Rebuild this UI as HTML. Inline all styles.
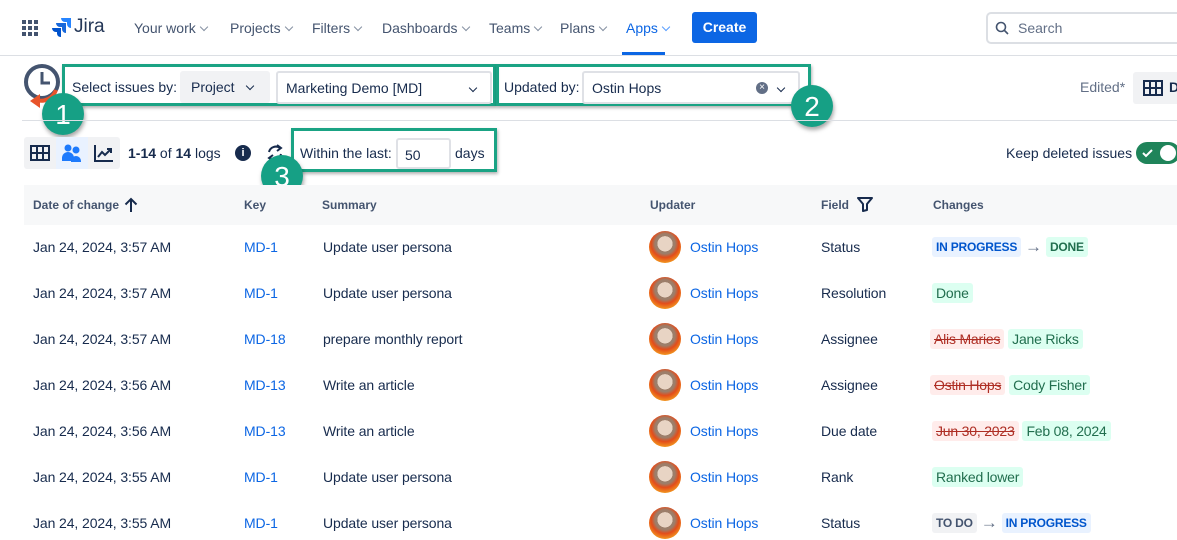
<!DOCTYPE html>
<html><head><meta charset="utf-8"><style>
*{box-sizing:border-box;margin:0;padding:0}
body{width:1177px;height:540px;overflow:hidden;background:#fff;font-family:"Liberation Sans",Arial,sans-serif;color:#172b4d;position:relative;font-size:14px}
.a{position:absolute;white-space:nowrap}
.nav{font-size:14px;color:#44546f;top:20px}
.chev{display:inline-block;width:6px;height:6px;border-right:1.5px solid #8590a2;border-bottom:1.5px solid #8590a2;transform:rotate(45deg);margin-left:5px;vertical-align:3px}
.gbox{position:absolute;border:3px solid #1aa384;box-shadow:1px 2px 3px rgba(0,0,0,.3)}
.badge{position:absolute;width:42px;height:42px;border-radius:50%;background:#16a085;color:#fff;font-size:28px;text-align:center;line-height:44px;box-shadow:1px 3px 4px rgba(0,0,0,.35)}
.sel{position:absolute;border:2px solid #dfe1e6;border-radius:3px;background:#fff;font-size:14px;padding:7px 8px;color:#172b4d}
.hd{top:198px;font-size:12px;font-weight:bold;color:#44546f}
.cell{font-size:14px;color:#172b4d;letter-spacing:-0.1px}
.link{color:#0c66e4}
.lz{display:inline-block;padding:2px 4px;border-radius:3px;font-size:14px;letter-spacing:-0.2px}
.old{background:#ffeceb;color:#ae2e24;text-decoration:line-through}
.new{background:#dcfff1;color:#216e4e}
.st{font-size:12px;font-weight:bold;padding:3px 4px}
.arr{color:#626f86;font-size:17px;vertical-align:-1px}
.av{position:absolute;width:32px;height:32px;border-radius:50%;background:radial-gradient(circle at 50% 40%,#e8d4c4 0 30%,#9c7e6a 31% 40%,#e34c1a 55%,#f4a020 80%)}
</style></head><body>
<svg class="a" style="left:22px;top:20px" width="16" height="16"><g fill="#44546f"><rect x="0" y="0" width="4" height="4"/><rect x="6" y="0" width="4" height="4"/><rect x="12" y="0" width="4" height="4"/><rect x="0" y="6" width="4" height="4"/><rect x="6" y="6" width="4" height="4"/><rect x="12" y="6" width="4" height="4"/><rect x="0" y="12" width="4" height="4"/><rect x="6" y="12" width="4" height="4"/><rect x="12" y="12" width="4" height="4"/></g></svg>
<svg class="a" style="left:52px;top:17px" width="20" height="20"><path d="M19 1H9a4 4 0 0 0 4 4h2v2a4 4 0 0 0 4 4z" fill="#2684ff"/><path d="M14 6H4a4 4 0 0 0 4 4h2v2a4 4 0 0 0 4 4z" fill="#1868db"/><path d="M9 11H0a4 4 0 0 0 4 4h1v2a4 4 0 0 0 4 3z" fill="#0052cc"/></svg>
<div class="a" style="left:74px;top:16px;font-size:19px;color:#253858">Jira</div>
<div class="a nav" style="left:134px">Your work<span class="chev"></span></div>
<div class="a nav" style="left:230px">Projects<span class="chev"></span></div>
<div class="a nav" style="left:312px">Filters<span class="chev"></span></div>
<div class="a nav" style="left:382px">Dashboards<span class="chev"></span></div>
<div class="a nav" style="left:489px">Teams<span class="chev"></span></div>
<div class="a nav" style="left:560px">Plans<span class="chev"></span></div>
<div class="a nav" style="left:626px;color:#0c66e4">Apps<span class="chev" style="border-color:#579dff"></span></div>
<div class="a" style="left:622px;top:52px;width:43px;height:3px;background:#0c66e4"></div>
<div class="a" style="left:692px;top:12px;width:65px;height:31px;background:#0c66e4;border-radius:3px;color:#fff;font-weight:bold;font-size:14px;text-align:center;line-height:31px">Create</div>
<div class="a" style="left:986px;top:12px;width:200px;height:32px;border:2px solid #dcdfe4;border-radius:5px"></div>
<svg class="a" style="left:995px;top:21px" width="14" height="14"><circle cx="6" cy="6" r="4.5" fill="none" stroke="#44546f" stroke-width="1.6"/><path d="M9.5 9.5L13 13" stroke="#44546f" stroke-width="1.6"/></svg>
<div class="a" style="left:1018px;top:20px;color:#626f86">Search</div>
<div class="a" style="left:0;top:55px;width:1177px;height:1px;background:#dcdfe4"></div>

<svg class="a" style="left:22px;top:62px" width="44" height="52"><circle cx="20" cy="20" r="16" fill="none" stroke="#44546f" stroke-width="4"/><path d="M20 10v11h8" fill="none" stroke="#44546f" stroke-width="3"/><path d="M34 28a16 16 0 0 1-20 10" fill="none" stroke="#e8542a" stroke-width="4"/><path d="M8 39l10-7v14z" fill="#e8542a"/></svg>
<div class="gbox" style="left:62px;top:64px;width:434px;height:42px"></div>
<div class="a" style="left:72px;top:79px">Select issues by:</div>
<div class="a" style="left:180px;top:71px;width:90px;height:32px;background:#f1f2f4;border-radius:3px"></div>
<div class="a" style="left:191px;top:79px">Project<span class="chev" style="border-color:#172b4d;margin-left:12px"></span></div>
<div class="sel" style="left:276px;top:71px;width:216px;height:33px">Marketing Demo [MD]<span class="chev" style="border-color:#172b4d;position:absolute;right:14px;top:12px"></span></div>
<div class="gbox" style="left:496px;top:64px;width:315px;height:42px"></div>
<div class="a" style="left:504px;top:79px">Updated by:</div>
<div class="sel" style="left:582px;top:71px;width:218px;height:33px">Ostin Hops
<span style="position:absolute;right:30px;top:9px;width:12px;height:12px;border-radius:50%;background:#626f86;color:#fff;font-size:10px;line-height:12px;text-align:center">×</span>
<span class="chev" style="border-color:#172b4d;position:absolute;right:14px;top:12px"></span></div>
<div class="badge" style="left:42px;top:93px">1</div>
<div class="badge" style="left:791px;top:85px">2</div>
<div class="a" style="left:1080px;top:79px;color:#626f86">Edited*</div>
<div class="a" style="left:1133px;top:72px;width:50px;height:32px;background:#f1f2f4;border-radius:3px"></div>
<svg class="a" style="left:1143px;top:80px" width="20" height="16"><rect x="1" y="1" width="18" height="14" fill="none" stroke="#172b4d" stroke-width="2"/><path d="M7 1v14M13 1v14M1 8h18" stroke="#172b4d" stroke-width="2"/></svg>
<div class="a" style="left:1169px;top:79px;font-weight:bold">D</div>
<div class="a" style="left:22px;top:120px;width:1155px;height:1px;background:#dcdfe4"></div>

<div class="a" style="left:24px;top:137px;width:96px;height:32px;background:#f1f2f4;border-radius:3px"></div>
<div class="a" style="left:56px;top:137px;width:32px;height:32px;background:#e9f2ff"></div>
<svg class="a" style="left:30px;top:145px" width="20" height="16"><rect x="1" y="1" width="18" height="14" fill="none" stroke="#172b4d" stroke-width="2"/><path d="M7 1v14M13 1v14M1 8h18" stroke="#172b4d" stroke-width="2"/></svg>
<svg class="a" style="left:62px;top:144px" width="20" height="18"><circle cx="6" cy="4" r="3.5" fill="#1d7afc"/><circle cx="14" cy="6" r="3.5" fill="#1d7afc"/><path d="M0 14a6 6 0 0 1 12 0v3H0z" fill="#1d7afc"/><path d="M9 17a5 5 0 0 1 10 0v1H9z" fill="#1d7afc"/></svg>
<svg class="a" style="left:94px;top:144px" width="20" height="18"><path d="M1 1v16h18" fill="none" stroke="#172b4d" stroke-width="2"/><path d="M4 13l4-5 3 3 6-6M13 5h4v4" fill="none" stroke="#172b4d" stroke-width="2"/></svg>
<div class="a" style="left:128px;top:145px"><b>1-14</b> of <b>14</b> logs</div>
<div class="a" style="left:235px;top:145px;width:16px;height:16px;border-radius:50%;background:#172b4d;color:#fff;font-size:11px;font-weight:bold;text-align:center;line-height:16px">i</div>
<svg class="a" style="left:265px;top:143px" width="20" height="20"><path d="M15 5a7 7 0 0 0-11 4M5 15a7 7 0 0 0 11-4" fill="none" stroke="#172b4d" stroke-width="2"/><path d="M12 2l4 3-4 3M8 18l-4-3 4-3" fill="none" stroke="#172b4d" stroke-width="2"/></svg>
<div class="gbox" style="left:291px;top:128px;width:206px;height:44px"></div>
<div class="a" style="left:300px;top:145px">Within the last:</div>
<div class="a" style="left:396px;top:138px;width:55px;height:31px;border:2px solid #dfe1e6;border-radius:3px;padding:7px 7px">50</div>
<div class="a" style="left:455px;top:145px">days</div>
<div class="badge" style="left:261px;top:155px">3</div>
<div class="a" style="left:1006px;top:145px">Keep deleted issues</div>
<div class="a" style="left:1136px;top:142px;width:44px;height:22px;border-radius:11px;background:#1f845a"></div>
<div class="a" style="left:1160px;top:145px;width:16px;height:16px;border-radius:50%;background:#fff"></div>
<svg class="a" style="left:1142px;top:148px" width="12" height="10"><path d="M1 5l3 3 6-6" fill="none" stroke="#fff" stroke-width="2"/></svg>

<div class="a" style="left:24px;top:185px;width:1153px;height:40px;background:#f7f8f9"></div>
<div class="a hd" style="left:33px">Date of change</div>
<svg class="a" style="left:124px;top:197px" width="14" height="16"><path d="M7 15V2M1.5 7.5L7 2l5.5 5.5" fill="none" stroke="#172b4d" stroke-width="2"/></svg>
<div class="a hd" style="left:244px">Key</div>
<div class="a hd" style="left:322px">Summary</div>
<div class="a hd" style="left:650px">Updater</div>
<div class="a hd" style="left:821px">Field</div>
<svg class="a" style="left:857px;top:197px" width="16" height="15"><path d="M1 1h14l-5 6v6l-4 1V7z" fill="none" stroke="#172b4d" stroke-width="2" stroke-linejoin="round"/></svg>
<div class="a hd" style="left:933px">Changes</div>

<div class="a cell" style="left:33px;top:239px">Jan 24, 2024, 3:57 AM</div><div class="a cell link" style="left:244px;top:239px">MD-1</div><div class="a cell" style="left:323px;top:239px">Update user persona</div><div class="av" style="left:649px;top:231px"></div><div class="a cell link" style="left:690px;top:239px">Ostin Hops</div><div class="a cell" style="left:821px;top:239px">Status</div>
<div class="a" style="left:932px;top:237px"><span class="lz st" style="background:#e9f2ff;color:#0055cc">IN PROGRESS</span> <span class="arr">→</span> <span class="lz st" style="background:#dcfff1;color:#216e4e">DONE</span></div>

<div class="a cell" style="left:33px;top:285px">Jan 24, 2024, 3:57 AM</div><div class="a cell link" style="left:244px;top:285px">MD-1</div><div class="a cell" style="left:323px;top:285px">Update user persona</div><div class="av" style="left:649px;top:277px"></div><div class="a cell link" style="left:690px;top:285px">Ostin Hops</div><div class="a cell" style="left:821px;top:285px">Resolution</div>
<div class="a" style="left:932px;top:283px"><span class="lz new">Done</span></div>

<div class="a cell" style="left:33px;top:331px">Jan 24, 2024, 3:57 AM</div><div class="a cell link" style="left:244px;top:331px">MD-18</div><div class="a cell" style="left:323px;top:331px">prepare monthly report</div><div class="av" style="left:649px;top:323px"></div><div class="a cell link" style="left:690px;top:331px">Ostin Hops</div><div class="a cell" style="left:821px;top:331px">Assignee</div>
<div class="a" style="left:930px;top:329px"><span class="lz old">Alis Maries</span> <span class="lz new">Jane Ricks</span></div>

<div class="a cell" style="left:33px;top:377px">Jan 24, 2024, 3:56 AM</div><div class="a cell link" style="left:244px;top:377px">MD-13</div><div class="a cell" style="left:323px;top:377px">Write an article</div><div class="av" style="left:649px;top:369px"></div><div class="a cell link" style="left:690px;top:377px">Ostin Hops</div><div class="a cell" style="left:821px;top:377px">Assignee</div>
<div class="a" style="left:930px;top:375px"><span class="lz old">Ostin Hops</span> <span class="lz new">Cody Fisher</span></div>

<div class="a cell" style="left:33px;top:423px">Jan 24, 2024, 3:56 AM</div><div class="a cell link" style="left:244px;top:423px">MD-13</div><div class="a cell" style="left:323px;top:423px">Write an article</div><div class="av" style="left:649px;top:415px"></div><div class="a cell link" style="left:690px;top:423px">Ostin Hops</div><div class="a cell" style="left:821px;top:423px">Due date</div>
<div class="a" style="left:932px;top:421px"><span class="lz old">Jun 30, 2023</span> <span class="lz new">Feb 08, 2024</span></div>

<div class="a cell" style="left:33px;top:469px">Jan 24, 2024, 3:55 AM</div><div class="a cell link" style="left:244px;top:469px">MD-1</div><div class="a cell" style="left:323px;top:469px">Update user persona</div><div class="av" style="left:649px;top:461px"></div><div class="a cell link" style="left:690px;top:469px">Ostin Hops</div><div class="a cell" style="left:821px;top:469px">Rank</div>
<div class="a" style="left:932px;top:467px"><span class="lz new">Ranked lower</span></div>

<div class="a cell" style="left:33px;top:515px">Jan 24, 2024, 3:55 AM</div><div class="a cell link" style="left:244px;top:515px">MD-1</div><div class="a cell" style="left:323px;top:515px">Update user persona</div><div class="av" style="left:649px;top:507px"></div><div class="a cell link" style="left:690px;top:515px">Ostin Hops</div><div class="a cell" style="left:821px;top:515px">Status</div>
<div class="a" style="left:932px;top:513px"><span class="lz st" style="background:#f1f2f4;color:#44546f">TO DO</span> <span class="arr">→</span> <span class="lz st" style="background:#e9f2ff;color:#0055cc">IN PROGRESS</span></div>
</body></html>
